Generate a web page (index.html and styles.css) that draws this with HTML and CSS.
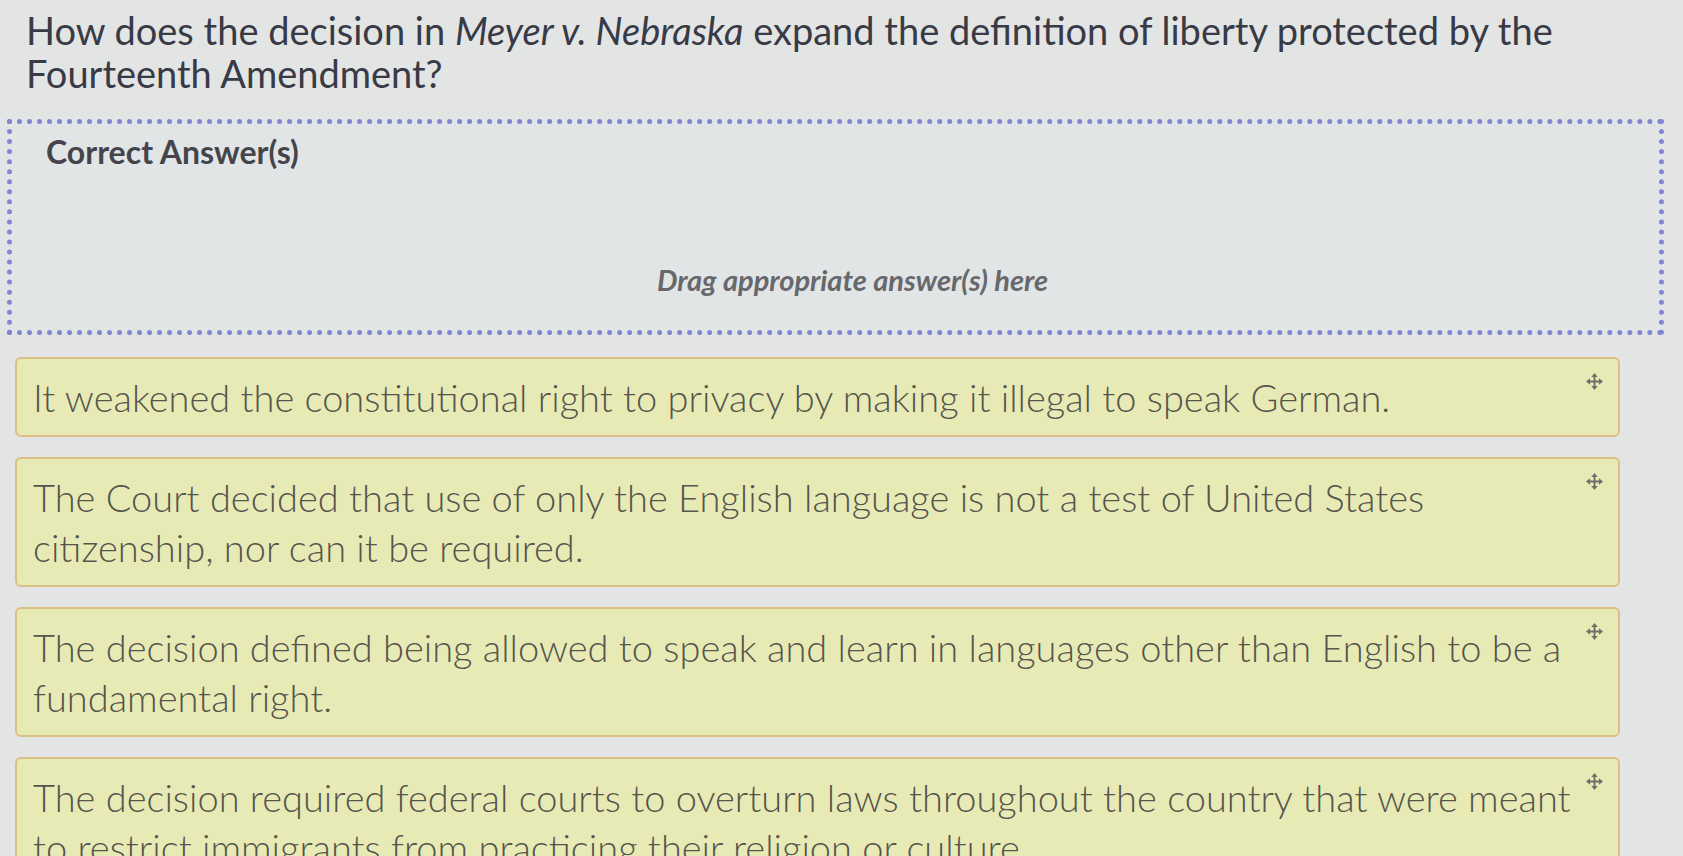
FILE: index.html
```html
<!doctype html>
<html lang="en">
  <head>
    <meta charset="UTF-8" />
    <meta name="viewport" content="width=device-width, initial-scale=1.0" />
    <title>Question - Drag and Drop</title>
    <link rel="stylesheet" href="styles.css">
  </head>
  <body>
    <h1 class="question">
      How does the decision in <em>Meyer v. Nebraska</em> expand the definition of liberty protected by the Fourteenth Amendment?
    </h1>

    <div class="drop-box">
      <div class="drop-label">Correct Answer(s)</div>
      <div class="drop-hint">Drag appropriate answer(s) here</div>
    </div>

    <div class="answers">
      <div class="answer">
        <span class="answer-text">It weakened the constitutional right to privacy by making it illegal to speak German.</span>
        <svg class="move" viewBox="0 0 16 16"><use href="#move-icon" /></svg>
      </div>
      <div class="answer">
        <span class="answer-text">The Court decided that use of only the English language is not a test of United States citizenship, nor can it be required.</span>
        <svg class="move" viewBox="0 0 16 16"><use href="#move-icon" /></svg>
      </div>
      <div class="answer">
        <span class="answer-text">The decision defined being allowed to speak and learn in languages other than English to be a fundamental right.</span>
        <svg class="move" viewBox="0 0 16 16"><use href="#move-icon" /></svg>
      </div>
      <div class="answer">
        <span class="answer-text">The decision required federal courts to overturn laws throughout the country that were meant to restrict immigrants from practicing their religion or culture.</span>
        <svg class="move" viewBox="0 0 16 16"><use href="#move-icon" /></svg>
      </div>
    </div>

    <!-- drag handle used on every answer card -->
    <svg class="sprite" xmlns="http://www.w3.org/2000/svg">
      <symbol id="move-icon" viewBox="0 0 16 16">
        <path d="M8 3v10M3 8h10" stroke="currentColor" stroke-width="1.8" fill="none" />
        <path d="M8 0 5 3.8h6zM8 16 5 12.2h6zM0 8 3.8 5v6zM16 8 12.2 5v6z" fill="currentColor" />
      </symbol>
    </svg>
  </body>
</html>
```

FILE: styles.css
```css
body {
  margin: 0;
  padding: 9px 0 0;
  background: #e3e5e5;
  font-family: Lato, "Open Sans", sans-serif;
  color: #3d3e47;
}
.question {
  margin: 0 40px 24px 26px;
  font-size: 38px;
  font-weight: 400;
  line-height: 43px;
  color: #383a45;
}
.question em {
  font-style: italic;
}
.drop-box {
  margin: 0 19px 0 7px;
  border: 5px dotted #7f87d3;
  padding: 12px 34px 35px;
  background: #e2e5e6;
}
.drop-label {
  font-size: 32px;
  font-weight: 700;
  line-height: 32px;
  color: #44454c;
}
.drop-hint {
  margin: 97px 0 0 34px;
  text-align: center;
  font-size: 29px;
  font-style: italic;
  font-weight: 700;
  line-height: 30px;
  color: #67686c;
}
.answers {
  display: flex;
  flex-direction: column;
  gap: 20px;
  margin: 22px 63px 0 15px;
}
.answer {
  position: relative;
  background: #e8eab6;
  border: 2px solid #dcbf86;
  border-radius: 6px;
  padding: 13px 36px 13px 16px;
  font-size: 38px;
  font-weight: 300;
  line-height: 50px;
  color: #55554d;
}
.move {
  position: absolute;
  top: 14px;
  right: 15px;
  width: 17px;
  height: 17px;
  color: #6e6f68;
}
.sprite {
  display: none;
}
```
